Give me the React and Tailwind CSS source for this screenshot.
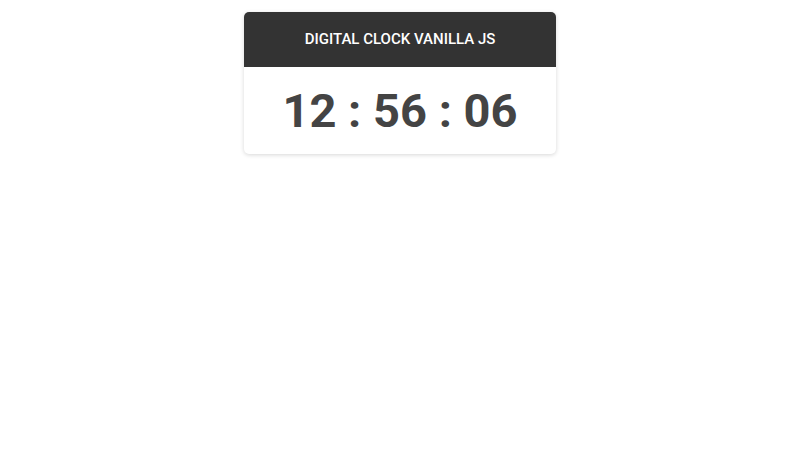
export default function App() {
  const time = { h: "12", m: "56", s: "06" };

  return (
    <div className="min-h-screen bg-white pt-3 font-['Roboto',sans-serif]">
      <div className="mx-auto w-[312px] overflow-hidden rounded-[5px] bg-white shadow-[0_1px_4px_rgba(0,0,0,0.16)]">
        {/* Header */}
        <div className="flex h-[55px] items-center justify-center bg-[#333333]">
          <h1 className="text-[15px] font-medium text-white">
            DIGITAL CLOCK VANILLA JS
          </h1>
        </div>

        {/* Clock */}
        <div className="flex h-[87px] items-center justify-center">
          <p className="text-[47px] font-bold leading-none text-[#444444]">
            {time.h} : {time.m} : {time.s}
          </p>
        </div>
      </div>
    </div>
  );
}
